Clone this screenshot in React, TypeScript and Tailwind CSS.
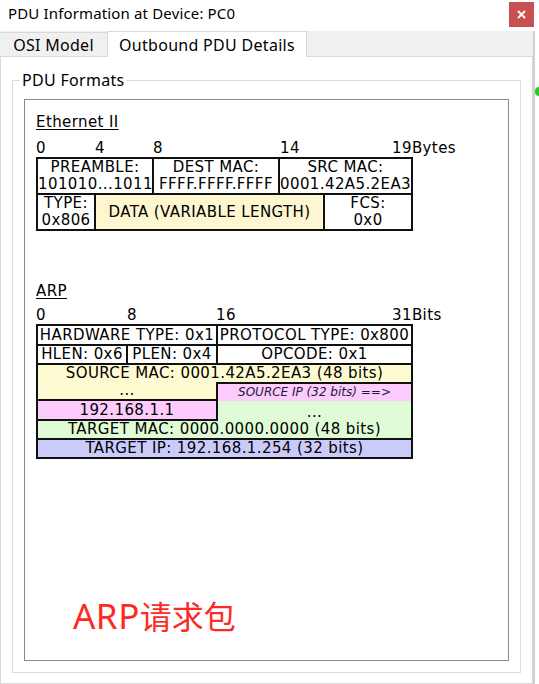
import React from "react";

// shared cell look for the field diagrams
const cell = "border-[#111] text-center whitespace-nowrap";

function EthernetTable() {
  return (
    <div
      className={`grid w-[377px] grid-cols-[58px_58px_126px_45px_88px] border-l-2 border-t-2 border-[#111] text-[15px] leading-[17px] tracking-[0.4px]`}
    >
      <div className={`col-span-2 border-r-2 border-b-2 ${cell}`}>
        PREAMBLE:
        <br />
        101010...1011
      </div>
      <div className={`border-r-2 border-b-2 ${cell}`}>
        DEST MAC:
        <br />
        FFFF.FFFF.FFFF
      </div>
      <div className={`col-span-2 border-r-2 border-b-2 ${cell}`}>
        SRC MAC:
        <br />
        0001.42A5.2EA3
      </div>
      <div className={`border-r-2 border-b-2 ${cell}`}>
        TYPE:
        <br />
        0x806
      </div>
      <div className={`col-span-3 flex items-center justify-center border-r-2 border-b-2 bg-[#fdf6d0] ${cell}`}>
        DATA (VARIABLE LENGTH)
      </div>
      <div className={`border-r-2 border-b-2 ${cell}`}>
        FCS:
        <br />
        0x0
      </div>
    </div>
  );
}

function ArpTable() {
  return (
    <div className="grid w-[377px] grid-cols-[90px_90px_195px] border-l-2 border-t-2 border-[#111] text-[15px] leading-[17px] tracking-[0.4px]">
      <div className={`col-span-2 border-r-2 border-b-2 leading-[18px] ${cell}`}>HARDWARE TYPE: 0x1</div>
      <div className={`border-r-2 border-b-2 leading-[18px] ${cell}`}>PROTOCOL TYPE: 0x800</div>
      <div className={`border-r-2 border-b-2 ${cell}`}>HLEN: 0x6</div>
      <div className={`border-r-2 border-b-2 ${cell}`}>PLEN: 0x4</div>
      <div className={`border-r-2 border-b-2 ${cell}`}>OPCODE: 0x1</div>

      {/* source MAC runs into the next row on the left */}
      <div className={`col-span-3 border-r-2 bg-[#fefbd2] ${cell}`}>SOURCE MAC: 0001.42A5.2EA3 (48 bits)</div>
      <div className={`col-span-2 flex items-center justify-center border-r-2 border-b-2 bg-[#fefbd2] ${cell}`}>...</div>
      <div className={`border-r-2 border-t-2 bg-[#fdcbfd] text-[12px] italic tracking-normal text-[#1c1c3a] ${cell}`}>
        SOURCE IP (32 bits) ==&gt;
      </div>

      <div className={`col-span-2 border-r-2 border-b-2 bg-[#fdcbfd] leading-[18px] ${cell}`}>192.168.1.1</div>
      <div className={`flex items-end justify-center border-r-2 bg-[#e0fcd6] ${cell}`}>...</div>
      <div className={`col-span-3 border-r-2 border-b-2 bg-[#e0fcd6] ${cell}`}>TARGET MAC: 0000.0000.0000 (48 bits)</div>
      <div className={`col-span-3 border-r-2 border-b-2 bg-[#cbcbfb] ${cell}`}>TARGET IP: 192.168.1.254 (32 bits)</div>
    </div>
  );
}

export default function App() {
  return (
    <div className="h-[684px] w-[539px] overflow-hidden bg-white font-['Noto_Sans',sans-serif] text-black">
      {/* title bar */}
      <div className="flex h-[31px] items-start">
        <div className="pl-[8px] pt-[3px] text-[15px] leading-[20px] tracking-[0.15px]">PDU Information at Device: PC0</div>
        <div className="ml-auto mr-[5px] mt-[2px] flex h-[25px] w-[25px] items-center justify-center bg-[#c75050]">
          <svg width="9" height="9" viewBox="0 0 9 9">
            <path d="M1 1L8 8M8 1L1 8" stroke="white" strokeWidth="1.8" />
          </svg>
        </div>
      </div>

      <div className="flex h-[653px]">
        <div className="flex w-[535px] flex-col border-r-2 border-[#cfcfcf] bg-[#f0f0f0]">
          {/* tabs */}
          <div className="flex h-[25px] items-end text-[16px] tracking-[0.3px]">
            <div className="flex h-[24px] w-[107px] items-center justify-center border-t border-[#d9d9d9]">OSI Model</div>
            <div className="relative z-10 -mb-px flex h-[26px] w-[200px] items-center justify-center border-x border-t border-[#d9d9d9] bg-white">
              Outbound PDU Details
            </div>
          </div>

          {/* tab page */}
          <div className="h-[628px] w-[533px] border border-[#d9d9d9] bg-white pl-[11px] pt-[13px]">
            <fieldset className="w-[509px] border border-[#dcdcdc] px-[11px] pb-[11px]">
              <legend className="-ml-[4px] px-[2px] text-[16px] leading-[20px] tracking-[0.3px]">PDU Formats</legend>
              <div className="mt-[9px] h-[562px] w-[485px] border border-[#8a8a8a] pl-[11px] pt-[13px] font-['DejaVu_Sans',sans-serif] text-[15px] leading-[18px] tracking-[0.4px]">
                <div className="underline underline-offset-2">Ethernet II</div>
                <div className="mt-[8px] flex h-[18px]">
                  <span className="w-[59px]">0</span>
                  <span className="w-[58px]">4</span>
                  <span className="w-[127px]">8</span>
                  <span className="w-[112px]">14</span>
                  <span>19Bytes</span>
                </div>
                <EthernetTable />

                <div className="mt-[51px] underline underline-offset-2">ARP</div>
                <div className="mt-[6px] flex h-[18px]">
                  <span className="w-[91px]">0</span>
                  <span className="w-[89px]">8</span>
                  <span className="w-[176px]">16</span>
                  <span>31Bits</span>
                </div>
                <ArpTable />

                <div className="ml-[37px] mt-[136px] leading-[40px] tracking-normal text-[#ff2a1f]">
                  <span className="font-['Noto_Sans',sans-serif] text-[35px] tracking-[0.5px]">ARP</span>
                  <span className="font-['Noto_Sans_CJK_SC',sans-serif] text-[32px]">请求包</span>
                </div>
              </div>
            </fieldset>
          </div>
        </div>

        {/* sliver of the window behind */}
        <div className="flex-1 pt-[56px]">
          <div className="h-[9px] w-[4px] rounded-l-full bg-[#1fd31f]" />
        </div>
      </div>
    </div>
  );
}
